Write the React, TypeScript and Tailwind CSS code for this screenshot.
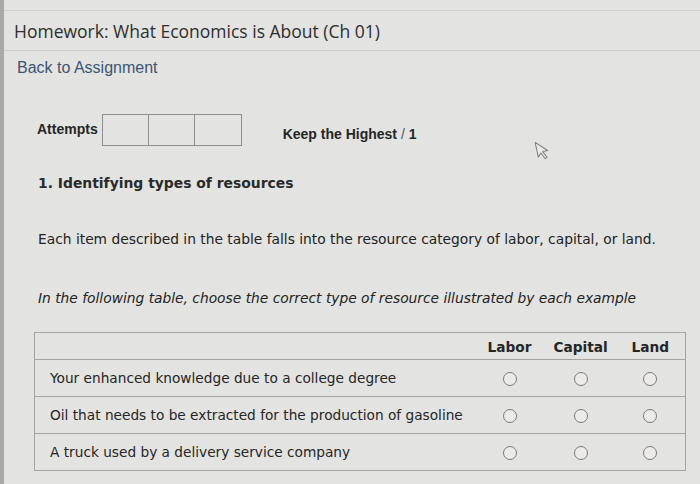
const rows = [
  'Your enhanced knowledge due to a college degree',
  'Oil that needs to be extracted for the production of gasoline',
  'A truck used by a delivery service company',
];

function Radio() {
  return <span className="inline-block w-[14px] h-[14px] rounded-full border border-[#7a7a7a] bg-[#ecebea]" />;
}

function Cursor() {
  return (
    <svg width="14" height="21" viewBox="0 0 14 21" className="-rotate-12" aria-hidden>
      <path d="M1 1 L1 16 L4.5 12.5 L7.5 19 L9.5 18 L6.5 11.5 L11.5 11.5 Z" fill="#ecebea" stroke="#7c7c7c" strokeWidth="1" strokeLinejoin="round" />
    </svg>
  );
}

export default function App() {
  return (
    <div className="w-[700px] h-[484px] overflow-hidden bg-[#e3e3e1] text-[#262626] border-l-[4px] border-[#a9a9a7]">
      <div className="mt-[10px] border-t border-[#cfcfcd]">
        <h1
          className="pl-[10px] pt-[9px] pb-[8px] text-[17.5px] leading-[22px] text-[#2e2e2e]"
          style={{ fontFamily: '"Open Sans", sans-serif' }}
        >
          Homework: What Economics is About (Ch 01)
        </h1>
      </div>
      <div className="border-t border-[#cacac8] pt-[4px] pl-[13px]">
        <a className="text-[16px] leading-[20px] text-[#3c5573]" style={{ fontFamily: '"Liberation Sans", Arial, sans-serif' }}>
          Back to Assignment
        </a>
      </div>

      <div className="pl-[33px] pt-[35px]" style={{ fontFamily: '"Liberation Sans", Arial, sans-serif' }}>
        <div className="flex items-start">
          <span className="text-[14px] font-bold mt-[5px] mr-[4px]">Attempts</span>
          <div className="flex border border-[#8f8f8f]">
            <div className="w-[46px] h-[30px] border-r border-[#8f8f8f]" />
            <div className="w-[46px] h-[30px] border-r border-[#8f8f8f]" />
            <div className="w-[46px] h-[30px]" />
          </div>
          <span className="ml-[41px] mt-[10px] text-[14px] font-bold">
            Keep the Highest <span className="font-normal text-[#555]">/</span> 1
          </span>
          <span className="ml-[119px] mt-[26px]">
            <Cursor />
          </span>
        </div>
      </div>

      <div className="pl-[34px] pr-[10px]" style={{ fontFamily: '"DejaVu Sans", Verdana, sans-serif' }}>
        <p className="mt-[12px] text-[13.9px] leading-[20px] font-bold text-[#2a2a2a]">1. Identifying types of resources</p>
        <p className="mt-[36px] text-[13.8px] leading-[20px] text-[#222]">
          Each item described in the table falls into the resource category of labor, capital, or land.
        </p>
        <p className="mt-[39px] text-[13.8px] leading-[20px] italic text-[#222]">
          In the following table, choose the correct type of resource illustrated by each example
        </p>

        <table className="mt-[24px] -ml-[4px] w-[652px] border border-[#a3a3a1] border-collapse text-[13.7px]">
          <thead>
            <tr className="h-[27px] border-b border-[#a3a3a1]">
              <th />
              <th className="w-[72px] font-bold text-center pt-[2px]">Labor</th>
              <th className="w-[70px] font-bold text-center pt-[2px]">Capital</th>
              <th className="w-[70px] font-bold text-center pt-[2px]">Land</th>
            </tr>
          </thead>
          <tbody>
            {rows.map((r, i) => (
              <tr key={r} className={`h-[37px] ${i < rows.length - 1 ? 'border-b border-[#a3a3a1]' : ''}`}>
                <td className="pl-[15px] text-left">{r}</td>
                <td className="text-center pt-[6px]"><Radio /></td>
                <td className="text-center pt-[6px]"><Radio /></td>
                <td className="text-center pt-[6px]"><Radio /></td>
              </tr>
            ))}
          </tbody>
        </table>
      </div>
    </div>
  );
}
